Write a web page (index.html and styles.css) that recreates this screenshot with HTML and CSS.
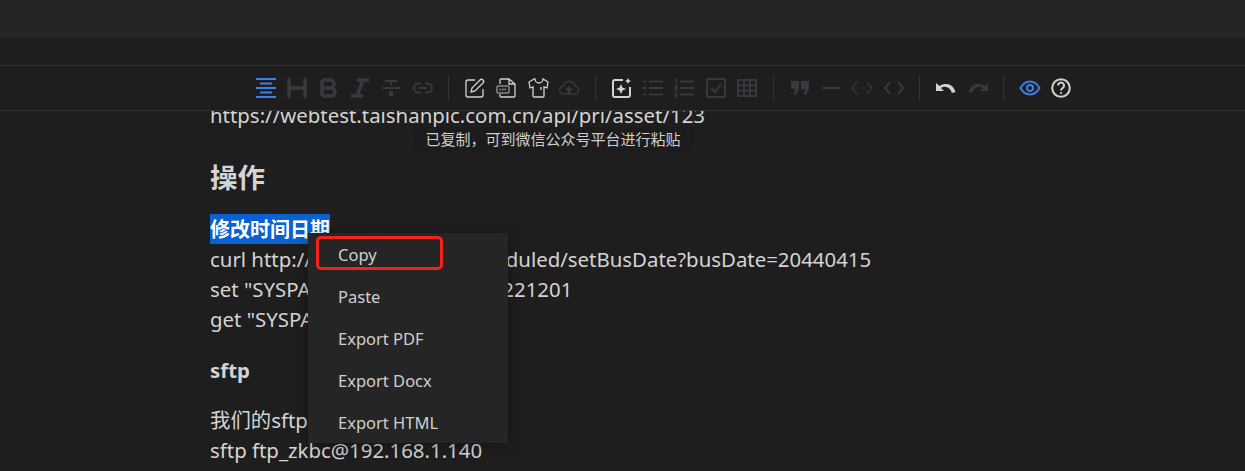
FILE: index.html
```html
<!DOCTYPE html>
<html lang="zh">
<head>
<meta charset="utf-8">
<title>Editor</title>
<link rel="stylesheet" href="styles.css">
</head>
<body>
<div class="app">
  <div class="titlebar"></div>
  <div class="tabbar"></div>
  <div class="toolbar">
    <span class="tool on"><svg viewBox="0 0 20 20"><path d="M0 1h20M4 5.500h12M0 10h20M4 14.500h12M0 19h20"/></svg></span>
    <span class="tool off"><svg viewBox="0 0 20 20"><path class="thick" d="M2 0v20M18 0v20M2 10h16"/></svg></span>
    <span class="tool off"><svg viewBox="0 0 20 20"><path class="thick" d="M4 2v16M4 2h8a4 4 0 0 1 0 8H4m0 0h9a4 4 0 0 1 0 8H4"/></svg></span>
    <span class="tool off"><svg viewBox="0 0 20 20"><path class="thick" d="M7 2h12M1 18h12M13 2 7 18"/></svg></span>
    <span class="tool off"><svg viewBox="0 0 20 20"><path d="M1 10h18M4 3h12M10 3v4M9 14h2v3H9z"/></svg></span>
    <span class="tool off"><svg viewBox="0 0 20 20"><path d="M8 5.500H5.500a4.500 4.500 0 0 0 0 9H8M12 5.500h2.500a4.500 4.500 0 0 1 0 9H12M6 10h8"/></svg></span>
    <span class="divider"></span>
    <span class="tool live"><svg viewBox="0 0 20 20"><path class="thin" d="M10 2H3a2 2 0 0 0-2 2v13a2 2 0 0 0 2 2h13a2 2 0 0 0 2-2v-6M6 14l1-4 8-8a2 2 0 0 1 3 3l-8 8z"/></svg></span>
    <span class="tool live"><svg viewBox="0 0 20 20"><path class="thin" d="M4 6V2a1 1 0 0 1 1-1h8l6 5v12a1 1 0 0 1-1 1H5a1 1 0 0 1-1-1v-2M13 1v5h6"/><rect class="badge" x="1" y="8" width="12" height="7" rx="1"/><path class="badge-mark" d="M3.500 11.500h7"/></svg></span>
    <span class="tool live"><svg viewBox="0 0 20 20"><path class="thin" d="M6 1 1 4l1 6 3-1v9a1 1 0 0 0 1 1h9a1 1 0 0 0 1-1V9l3 1 1-6-5-3a4 4 0 0 1-8 0zM13 9v3"/></svg></span>
    <span class="tool off"><svg viewBox="0 0 20 20"><path class="thin-off" d="M5 16a4 4 0 0 1-.6-8A6 6 0 0 1 16 8a4 4 0 0 1-1 8z"/><path class="solid" d="M10 8l4 4h-2.500v4h-3v-4H6z"/></svg></span>
    <span class="divider"></span>
    <span class="tool live"><svg viewBox="0 0 20 20"><path class="medium" d="M11 2H3a2 2 0 0 0-2 2v13a2 2 0 0 0 2 2h13a2 2 0 0 0 2-2V9"/><path class="solid" d="M9 6l1.500 3.500L14 11l-3.500 1.500L9 16l-1.500-3.500L4 11l3.500-1.500zM16 0l1 2 2 1-2 1-1 2-1-2-2-1 2-1z"/></svg></span>
    <span class="tool off"><svg viewBox="0 0 20 20"><path d="M6 3.500h14M6 10h14M6 16.500h14M0 3.500h3M0 10h3M0 16.500h3"/></svg></span>
    <span class="tool off"><svg viewBox="0 0 20 20"><path d="M6 3.500h14M6 10h14M6 16.500h14"/><path class="thin" d="M1 1.500h1.500v4M.5 8h2.500v2H1v2h2.500M.5 15H3v4H.5M1 17h2"/></svg></span>
    <span class="tool off"><svg viewBox="0 0 20 20"><path d="M3 1h14a2 2 0 0 1 2 2v14a2 2 0 0 1-2 2H3a2 2 0 0 1-2-2V3a2 2 0 0 1 2-2zM5 10l4 4 6-8"/></svg></span>
    <span class="tool off"><svg viewBox="0 0 20 20"><path d="M1 2h18v16H1zM1 7.300h18M1 12.700h18M7 2v16M13 2v16"/></svg></span>
    <span class="divider"></span>
    <span class="tool off"><svg viewBox="0 0 20 20"><path class="solid" d="M1 3h8v8l-3 6H4l1-6H1zM11 3h8v8l-3 6h-2l1-6h-4z"/></svg></span>
    <span class="tool off"><svg viewBox="0 0 20 20"><path class="thick-2" d="M1 10h18"/></svg></span>
    <span class="tool off"><svg viewBox="0 0 20 20"><path class="thin" d="M5 4l-5 6 5 6M15 4l5 6-5 6M6.500 10h1M9.500 10h1M12.500 10h1"/></svg></span>
    <span class="tool off"><svg viewBox="0 0 20 20"><path d="M6 4l-5 6 5 6M14 4l5 6-5 6"/></svg></span>
    <span class="divider"></span>
    <span class="tool live"><svg viewBox="0 0 20 20"><path class="solid" d="M0 5v8h8l-3-3c4-2.500 9-1 11 5l3.500-1C17 6 10 4 3.500 8z"/></svg></span>
    <span class="tool off"><svg viewBox="0 0 20 20"><path class="solid" d="M20 5v8h-8l3-3C11 7.500 6 9 4 15l-3.500-1C3 6 10 4 16.500 8z"/></svg></span>
    <span class="divider"></span>
    <span class="tool on"><svg viewBox="0 0 20 20"><path class="thick-2" d="M.5 10C3 5.500 6 3.500 10 3.500s7 2 9.500 6.500c-2.500 4.500-5.500 6.500-9.500 6.500S3 14.500.5 10z"/><circle class="thick-2" cx="10" cy="10" r="3"/></svg></span>
    <span class="tool live"><svg viewBox="0 0 20 20"><circle class="medium" cx="10" cy="10" r="8.800"/><path class="medium" d="M7 7.500a3 3 0 1 1 4.500 2.600c-1 .6-1.500 1.200-1.500 2.400"/><circle class="dot" cx="10" cy="15" r="1.100"/></svg></span>
  </div>
  <main class="doc">
    <div class="doc-inner">
      <p class="line">https://webtest.taishanpic.com.cn/api/pri/asset/123</p>
      <h2 class="h-op">操作</h2>
      <p class="para">
        <strong class="picked">修改时间日期</strong><br>
        curl http://host1:8080/api/scheduled/setBusDate?busDate=20440415<br>
        set "SYSPARAM:BUSDATE:A" 20221201<br>
        get "SYSPARAM:BUSDATE:A"
      </p>
      <h4 class="h-sub">sftp</h4>
      <p class="para">我们的sftp 地址<br>sftp ftp_zkbc@192.168.1.140</p>
    </div>
  </main>
  <div class="toast">已复制，可到微信公众号平台进行粘贴</div>
  <ul class="menu">
    <li class="menu-item">Copy</li>
    <li class="menu-item">Paste</li>
    <li class="menu-item">Export PDF</li>
    <li class="menu-item">Export Docx</li>
    <li class="menu-item">Export HTML</li>
  </ul>
  <div class="callout"></div>
</div>
</body>
</html>
```
FILE: styles.css
```css
* { box-sizing: border-box; }
html, body { margin: 0; height: 100%; }
body {
  background: #1e1e1e;
  color: #d4d4d4;
  font-family: "Noto Sans", "Noto Sans CJK SC", sans-serif;
  overflow: hidden;
}
.app { position: relative; height: 471px; display: flex; flex-direction: column; overflow: hidden; }
.titlebar { height: 38px; flex: none; background: #252525; }
.tabbar { height: 27px; flex: none; background: #1e1e1e; }
.toolbar {
  height: 46px;
  flex: none;
  display: flex;
  align-items: center;
  padding-left: 250px;
  border-top: 1px solid #333;
  border-bottom: 1px solid #333;
  background: #1e1e1e;
}
.tool { width: 31.4px; height: 20px; display: flex; justify-content: center; align-items: center; }
.tool svg { width: 20px; height: 20px; fill: none; stroke: currentColor; stroke-width: 2; overflow: visible; }
.on { color: #3a7fe6; }
.off { color: #36393d; }
.live { color: #d2d2d2; }
.divider { width: 1px; height: 24px; margin: 0 10px; background: #333; }
.thick { stroke-width: 3.6; }
.thick-2 { stroke-width: 2; }
.thin { stroke-width: 1.300; }
.thin-off { stroke-width: 1.500; }
.medium { stroke-width: 2; }
.solid { fill: currentColor; stroke: none; }
.badge { fill: #1e1e1e; stroke: #8a8a8a; stroke-width: 1.500; }
.badge-mark { stroke: #8a8a8a; stroke-width: 2; stroke-dasharray: 1.500 1; }
.dot { fill: currentColor; stroke: none; }
.doc { flex: 1; min-height: 0; overflow: hidden; padding-left: 210px; font-size: 20.4px; line-height: 30px; }
.doc-inner { margin-top: -11px; }
.line, .para { margin: 0; }
.h-op { margin: 29px 0 17px; font-size: 27.500px; line-height: 38px; font-weight: 700; }
.h-sub { margin: 21px 0 20px; font-size: 20.4px; line-height: 30px; font-weight: 700; }
.picked { display: inline-block; height: 30px; padding-top: 1px; color: #fff; background: #0a62d0; font-size: 20px; line-height: 30px; }
.toast {
  position: absolute;
  left: 413px;
  top: 127px;
  width: 280px;
  height: 24px;
  text-align: center;
  font-size: 15px;
  line-height: 24px;
  color: #cfcfcf;
  background: #1c1c1c;
  border-radius: 4px;
}
.menu {
  position: absolute;
  left: 308px;
  top: 233px;
  width: 200px;
  height: 210px;
  margin: 0;
  padding: 1px 0 0;
  list-style: none;
  background: #252525;
  box-shadow: 0 2px 12px rgba(0, 0, 0, .35);
}
.menu-item { height: 42px; padding-left: 30px; font-size: 16.500px; line-height: 42px; color: #cfcfcf; }
.callout {
  position: absolute;
  left: 316px;
  top: 236px;
  width: 127px;
  height: 34px;
  border: 3px solid #f3231b;
  border-radius: 5px;
}
```
